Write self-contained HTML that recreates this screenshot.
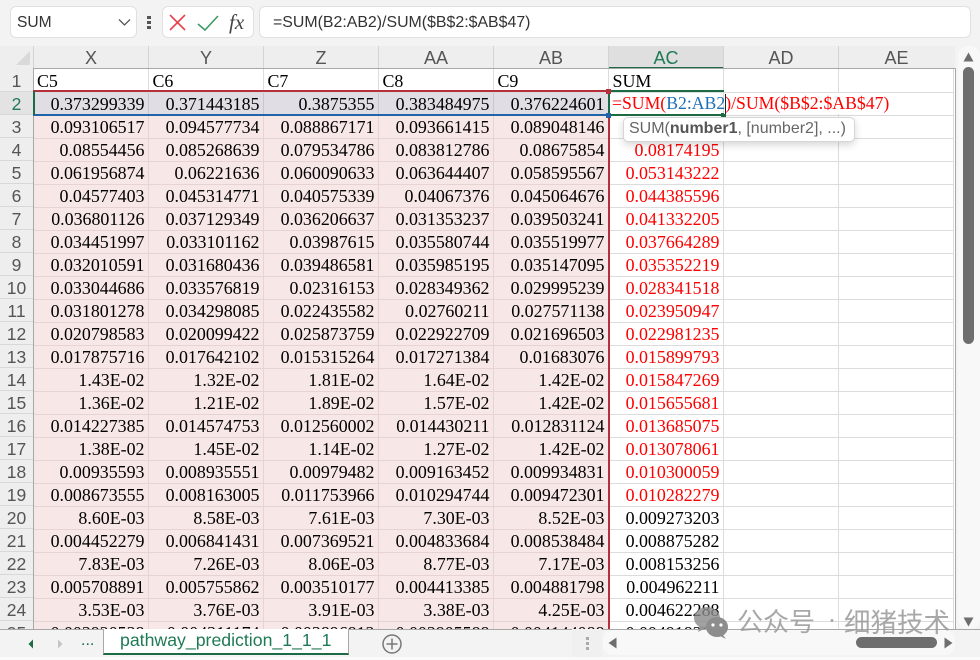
<!DOCTYPE html>
<html><head><meta charset="utf-8">
<style>
html,body{margin:0;padding:0;width:980px;height:660px;overflow:hidden;background:#f3f3f3}
*{box-sizing:border-box}
.a{position:absolute}
.ui{font-family:"Liberation Sans",sans-serif}
#sheet{position:absolute;left:0;top:0;border-collapse:collapse;table-layout:fixed;width:920px;font:17.9px/22px "Liberation Serif",serif;color:#000}
#sheet td{width:115px;height:23px;padding:0 3px 0 4px;text-align:right;white-space:nowrap;overflow:hidden;border-right:1px solid #dcdcdc;border-bottom:1px solid #dcdcdc;background:#fff;vertical-align:middle}
#sheet td.p{background:#f8e7e7;border-right-color:#e6d4d4;border-bottom-color:#e6d4d4}
#sheet tr.s td.p{background:#e0dde4;border-right-color:#c9c6cd;border-bottom-color:#c9c6cd}
#sheet td.l{text-align:left;padding-top:1px}
#sheet td.r{color:#f00}
#wrap{position:absolute;left:33px;top:69px;width:922px;height:560px;overflow:hidden;background:#fff}
.ch{position:absolute;top:46px;height:23px;width:115px;text-align:center;font:18px/24px "Liberation Sans",sans-serif;color:#555;border-right:1px solid #d4d4d4}
.rh{position:absolute;left:0;width:33px;height:23px;text-align:center;font:17.5px/24px "Liberation Sans",sans-serif;color:#555;border-bottom:1px solid #d8d8d8;padding-left:0}
</style></head>
<body>
<div class="a" style="left:0;top:0;width:980px;height:46px;background:#f3f3f3"></div>
<div class="a" style="left:10px;top:6px;width:127px;height:32px;background:#fff;border:1px solid #e0e0e0;border-radius:6px"></div>
<div class="a ui" style="left:17px;top:12px;font-size:15.6px;line-height:22px;color:#333">SUM</div>
<svg class="a" style="left:118px;top:18px" width="14" height="9"><path d="M1 1.500L6.500 7L12 1.500" fill="none" stroke="#555" stroke-width="1.300"/></svg>
<div class="a" style="left:147px;top:16px;width:4px;height:3px;background:#555"></div>
<div class="a" style="left:147px;top:21px;width:4px;height:3px;background:#555"></div>
<div class="a" style="left:147px;top:26px;width:4px;height:3px;background:#555"></div>
<div class="a" style="left:162px;top:6px;width:92px;height:32px;background:#fff;border:1px solid #e0e0e0;border-radius:6px"></div>
<svg class="a" style="left:168px;top:12px" width="84" height="22"><path d="M2 3L17 18M17 3L2 18" stroke="#e8434b" stroke-width="1.600" fill="none"/><path d="M30 12L37 18L50 4" stroke="#3f9a68" stroke-width="1.600" fill="none"/></svg>
<div class="a" style="left:229px;top:9px;font:italic 21px/26px 'Liberation Serif',serif;color:#444">fx</div>
<div class="a" style="left:259px;top:6px;width:712px;height:32px;background:#fff;border:1px solid #e0e0e0;border-radius:6px"></div>
<div class="a ui" style="left:273px;top:12px;font-size:15.9px;line-height:22px;color:#333;white-space:nowrap">=SUM(B2:AB2)/SUM($B$2:$AB$47)</div>

<div class="a" style="left:0;top:46px;width:955px;height:23px;background:#eeeeee"></div>
<svg class="a" style="left:14px;top:49px" width="18" height="18"><path d="M16 2V16H2Z" fill="#d9d9d9"/></svg>
<div class="a" style="left:33px;top:46px;width:1px;height:23px;background:#d4d4d4"></div>
<div class="ch" style="left:34px">X</div>
<div class="ch" style="left:149px">Y</div>
<div class="ch" style="left:264px">Z</div>
<div class="ch" style="left:379px">AA</div>
<div class="ch" style="left:494px">AB</div>
<div class="ch" style="left:609px;background:#dfdfdf;color:#1f7a55;border-bottom:2px solid #1d6b45">AC</div>
<div class="ch" style="left:724px">AD</div>
<div class="ch" style="left:839px;border-right:0">AE</div>

<div class="a" style="left:0;top:69px;width:33px;height:560px;background:#eeeeee"></div>
<div class="rh" style="top:69px">1</div>
<div class="rh" style="top:92px;background:#e2e3e2;color:#1f7a55">2</div>
<div class="rh" style="top:115px">3</div>
<div class="rh" style="top:138px">4</div>
<div class="rh" style="top:161px">5</div>
<div class="rh" style="top:184px">6</div>
<div class="rh" style="top:207px">7</div>
<div class="rh" style="top:230px">8</div>
<div class="rh" style="top:253px">9</div>
<div class="rh" style="top:276px">10</div>
<div class="rh" style="top:299px">11</div>
<div class="rh" style="top:322px">12</div>
<div class="rh" style="top:345px">13</div>
<div class="rh" style="top:368px">14</div>
<div class="rh" style="top:391px">15</div>
<div class="rh" style="top:414px">16</div>
<div class="rh" style="top:437px">17</div>
<div class="rh" style="top:460px">18</div>
<div class="rh" style="top:483px">19</div>
<div class="rh" style="top:506px">20</div>
<div class="rh" style="top:529px">21</div>
<div class="rh" style="top:552px">22</div>
<div class="rh" style="top:575px">23</div>
<div class="rh" style="top:598px">24</div>
<div class="rh" style="top:621px">25</div>

<div id="wrap"><table id="sheet" cellspacing="0">
<tr><td class="l">C5</td><td class="l">C6</td><td class="l">C7</td><td class="l">C8</td><td class="l">C9</td><td class="l">SUM</td><td></td><td></td></tr>
<tr class="s"><td class="p">0.373299339</td><td class="p">0.371443185</td><td class="p">0.3875355</td><td class="p">0.383484975</td><td class="p">0.376224601</td><td></td><td></td><td></td></tr>
<tr><td class="p">0.093106517</td><td class="p">0.094577734</td><td class="p">0.088867171</td><td class="p">0.093661415</td><td class="p">0.089048146</td><td></td><td></td><td></td></tr>
<tr><td class="p">0.08554456</td><td class="p">0.085268639</td><td class="p">0.079534786</td><td class="p">0.083812786</td><td class="p">0.08675854</td><td class="r">0.08174195</td><td></td><td></td></tr>
<tr><td class="p">0.061956874</td><td class="p">0.06221636</td><td class="p">0.060090633</td><td class="p">0.063644407</td><td class="p">0.058595567</td><td class="r">0.053143222</td><td></td><td></td></tr>
<tr><td class="p">0.04577403</td><td class="p">0.045314771</td><td class="p">0.040575339</td><td class="p">0.04067376</td><td class="p">0.045064676</td><td class="r">0.044385596</td><td></td><td></td></tr>
<tr><td class="p">0.036801126</td><td class="p">0.037129349</td><td class="p">0.036206637</td><td class="p">0.031353237</td><td class="p">0.039503241</td><td class="r">0.041332205</td><td></td><td></td></tr>
<tr><td class="p">0.034451997</td><td class="p">0.033101162</td><td class="p">0.03987615</td><td class="p">0.035580744</td><td class="p">0.035519977</td><td class="r">0.037664289</td><td></td><td></td></tr>
<tr><td class="p">0.032010591</td><td class="p">0.031680436</td><td class="p">0.039486581</td><td class="p">0.035985195</td><td class="p">0.035147095</td><td class="r">0.035352219</td><td></td><td></td></tr>
<tr><td class="p">0.033044686</td><td class="p">0.033576819</td><td class="p">0.02316153</td><td class="p">0.028349362</td><td class="p">0.029995239</td><td class="r">0.028341518</td><td></td><td></td></tr>
<tr><td class="p">0.031801278</td><td class="p">0.034298085</td><td class="p">0.022435582</td><td class="p">0.02760211</td><td class="p">0.027571138</td><td class="r">0.023950947</td><td></td><td></td></tr>
<tr><td class="p">0.020798583</td><td class="p">0.020099422</td><td class="p">0.025873759</td><td class="p">0.022922709</td><td class="p">0.021696503</td><td class="r">0.022981235</td><td></td><td></td></tr>
<tr><td class="p">0.017875716</td><td class="p">0.017642102</td><td class="p">0.015315264</td><td class="p">0.017271384</td><td class="p">0.01683076</td><td class="r">0.015899793</td><td></td><td></td></tr>
<tr><td class="p">1.43E-02</td><td class="p">1.32E-02</td><td class="p">1.81E-02</td><td class="p">1.64E-02</td><td class="p">1.42E-02</td><td class="r">0.015847269</td><td></td><td></td></tr>
<tr><td class="p">1.36E-02</td><td class="p">1.21E-02</td><td class="p">1.89E-02</td><td class="p">1.57E-02</td><td class="p">1.42E-02</td><td class="r">0.015655681</td><td></td><td></td></tr>
<tr><td class="p">0.014227385</td><td class="p">0.014574753</td><td class="p">0.012560002</td><td class="p">0.014430211</td><td class="p">0.012831124</td><td class="r">0.013685075</td><td></td><td></td></tr>
<tr><td class="p">1.38E-02</td><td class="p">1.45E-02</td><td class="p">1.14E-02</td><td class="p">1.27E-02</td><td class="p">1.42E-02</td><td class="r">0.013078061</td><td></td><td></td></tr>
<tr><td class="p">0.00935593</td><td class="p">0.008935551</td><td class="p">0.00979482</td><td class="p">0.009163452</td><td class="p">0.009934831</td><td class="r">0.010300059</td><td></td><td></td></tr>
<tr><td class="p">0.008673555</td><td class="p">0.008163005</td><td class="p">0.011753966</td><td class="p">0.010294744</td><td class="p">0.009472301</td><td class="r">0.010282279</td><td></td><td></td></tr>
<tr><td class="p">8.60E-03</td><td class="p">8.58E-03</td><td class="p">7.61E-03</td><td class="p">7.30E-03</td><td class="p">8.52E-03</td><td>0.009273203</td><td></td><td></td></tr>
<tr><td class="p">0.004452279</td><td class="p">0.006841431</td><td class="p">0.007369521</td><td class="p">0.004833684</td><td class="p">0.008538484</td><td>0.008875282</td><td></td><td></td></tr>
<tr><td class="p">7.83E-03</td><td class="p">7.26E-03</td><td class="p">8.06E-03</td><td class="p">8.77E-03</td><td class="p">7.17E-03</td><td>0.008153256</td><td></td><td></td></tr>
<tr><td class="p">0.005708891</td><td class="p">0.005755862</td><td class="p">0.003510177</td><td class="p">0.004413385</td><td class="p">0.004881798</td><td>0.004962211</td><td></td><td></td></tr>
<tr><td class="p">3.53E-03</td><td class="p">3.76E-03</td><td class="p">3.91E-03</td><td class="p">3.38E-03</td><td class="p">4.25E-03</td><td>0.004622288</td><td></td><td></td></tr>
<tr><td class="p">0.003920538</td><td class="p">0.004311174</td><td class="p">0.003896813</td><td class="p">0.003905588</td><td class="p">0.004144088</td><td>0.004918366</td><td></td><td></td></tr>
</table></div>

<!-- grid frame -->
<div class="a" style="left:33px;top:68px;width:922px;height:1px;background:#a8a8a8"></div>
<div class="a" style="left:955px;top:68px;width:1px;height:561px;background:#a8a8a8"></div>
<div class="a" style="left:33px;top:69px;width:1px;height:560px;background:#a8a8a8"></div>

<!-- range highlights -->
<div class="a" style="left:33px;top:90px;width:575px;height:2px;background:#b5303a"></div>
<div class="a" style="left:33px;top:114px;width:575px;height:2px;background:#1f63a8"></div>
<div class="a" style="left:33px;top:91px;width:2px;height:24px;background:#1d6b45"></div>
<div class="a" style="left:608px;top:92px;width:2px;height:537px;background:#b5303a"></div>
<div class="a" style="left:609px;top:90px;width:115px;height:2px;background:#1d6b45"></div>
<div class="a" style="left:609px;top:114px;width:115px;height:2px;background:#1d6b45"></div>
<div class="a" style="left:608px;top:92px;width:2px;height:23px;background:#1d6b45"></div>
<div class="a" style="left:606px;top:89px;width:5px;height:5px;background:#b5303a"></div>
<div class="a" style="left:606px;top:113px;width:5px;height:5px;background:#1f63a8"></div>
<div class="a" style="left:721px;top:113px;width:5px;height:5px;background:#1d6b45"></div>
<div class="a" style="left:724px;top:93px;width:165px;height:21px;background:#fff"></div>
<div class="a" style="left:612px;top:92px;font:17.7px/23px 'Liberation Serif',serif;white-space:nowrap;color:#f00">=SUM(<span style="color:#1f6fb5">B2:AB2</span>)/SUM($B$2:$AB$47)</div>
<div class="a" style="left:725px;top:94px;width:1px;height:20px;background:#222"></div>

<!-- tooltip -->
<div class="a ui" style="left:623px;top:117px;width:232px;height:25px;background:#fff;border:1px solid #d6d6d6;border-radius:5px;box-shadow:0 3px 8px rgba(0,0,0,.16);font-size:16px;line-height:22px;padding-left:5px;color:#666;white-space:nowrap">SUM(<b style="color:#555">number1</b>, [number2], ...)</div>

<!-- scrollbar -->
<div class="a" style="left:956px;top:46px;width:24px;height:583px;background:#f3f3f3"></div>
<div class="a" style="left:958px;top:46px;width:22px;height:583px;background:#f8f8f8;border-radius:10px"></div>
<svg class="a" style="left:962px;top:51px" width="14" height="12"><path d="M1.500 10.500L6.500 1.500L11.500 10.500Z" fill="#6e6e6e"/></svg>
<div class="a" style="left:963px;top:67px;width:11px;height:277px;background:#6e6e6e;border-radius:6px"></div>
<svg class="a" style="left:962px;top:616px" width="14" height="12"><path d="M1.500 1.500L6.500 10.500L11.500 1.500Z" fill="#6e6e6e"/></svg>

<!-- bottom bar -->
<div class="a" style="left:0;top:629px;width:980px;height:28px;background:#f3f3f3;border-top:1px solid #a8a8a8"></div>
<div class="a" style="left:0;top:657px;width:980px;height:3px;background:#fafafa"></div>
<svg class="a" style="left:26px;top:637px" width="40" height="14"><path d="M7 2.500L2.500 7L7 11.500Z" fill="#1d6b45"/><path d="M32 2.500L36.500 7L32 11.500Z" fill="#c4c4c4"/></svg>
<div class="a ui" style="left:81px;top:630px;font-size:16px;line-height:22px;color:#1d6b45">...</div>
<div class="a" style="left:103px;top:629px;width:246px;height:26px;background:#fff;border-left:1px solid #a8a8a8;border-right:1px solid #a8a8a8;border-bottom:2px solid #1d6b45"></div>
<div class="a ui" style="left:120px;top:628px;font-size:17.7px;line-height:24px;color:#1f7a55;white-space:nowrap">pathway_prediction_1_1_1</div>
<svg class="a" style="left:381px;top:633px" width="22" height="22"><circle cx="11" cy="11" r="9" fill="none" stroke="#777" stroke-width="1.500"/><path d="M11 5.500V16.500M5.500 11H16.500" stroke="#777" stroke-width="1.500"/></svg>
<div class="a" style="left:572px;top:629px;width:30px;height:28px;background:#f0f0f0"></div>
<div class="a" style="left:586px;top:637px;width:3px;height:3px;background:#aaa"></div>
<div class="a" style="left:586px;top:642px;width:3px;height:3px;background:#aaa"></div>
<div class="a" style="left:586px;top:647px;width:3px;height:3px;background:#aaa"></div>
<div class="a" style="left:603px;top:630px;width:352px;height:25px;background:#f8f8f8;border-radius:10px"></div>
<svg class="a" style="left:607px;top:636px" width="12" height="14"><path d="M9.500 1.500L1.500 7L9.500 12.500Z" fill="#6e6e6e"/></svg>
<div class="a" style="left:856px;top:637px;width:81px;height:11px;background:#6e6e6e;border-radius:6px"></div>
<svg class="a" style="left:942px;top:636px" width="12" height="14"><path d="M2.500 1.500L10.500 7L2.500 12.500Z" fill="#6e6e6e"/></svg>

<!-- watermark -->
<svg class="a" style="left:692px;top:604px" width="48" height="36"><ellipse cx="15" cy="14" rx="13" ry="11" fill="#8a8a8a" fill-opacity=".8"/><path d="M8 22L6 28L14 24Z" fill="#8a8a8a" fill-opacity=".8"/><ellipse cx="25" cy="23" rx="11" ry="10" fill="#8d8d8d"/><path d="M31 31L34 35L28 32Z" fill="#8d8d8d"/><circle cx="21" cy="21" r="1.600" fill="#fff"/><circle cx="29" cy="21" r="1.600" fill="#fff"/></svg>
<div class="a" style="left:737px;top:603px;font:26px/36px 'Noto Sans CJK SC',sans-serif;color:#9a9a9a;opacity:.85;white-space:nowrap">公众号</div>
<div class="a" style="left:825px;top:603px;font:14px/36px 'Noto Sans CJK SC',sans-serif;color:#9a9a9a;opacity:.85;white-space:nowrap">·</div>
<div class="a" style="left:844px;top:603px;font:26.5px/36px 'Noto Sans CJK SC',sans-serif;color:#9a9a9a;opacity:.85;white-space:nowrap">细猪技术</div>
</body></html>
